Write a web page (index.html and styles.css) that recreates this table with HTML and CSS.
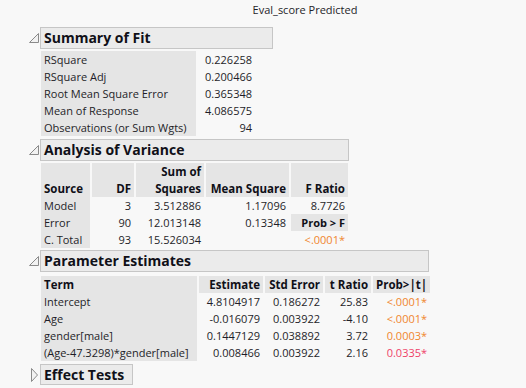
FILE: index.html
```html
<!DOCTYPE html>
<html lang="en">
<head>
  <meta charset="UTF-8" />
  <title>Eval_score Predicted</title>
  <link rel="stylesheet" href="styles.css">
</head>
<body>
  <div class="report-title">Eval_score Predicted</div>

  <!-- Summary of Fit -->
  <div class="outline outline-fit">
    <div class="outline-head">
      <svg class="disclosure" width="12" height="12" viewBox="0 0 12 12"><polygon points="10.5,1.5 10.5,10.5 1.5,10.5" fill="#f2f2f2" stroke="#8a8a8a" stroke-width="1"/></svg>
      <div class="outline-box box-fit">Summary of Fit</div>
    </div>
    <table class="report-table fit-table">
      <tr><td class="lbl">RSquare</td><td class="num">0.226258</td></tr>
      <tr><td class="lbl">RSquare Adj</td><td class="num">0.200466</td></tr>
      <tr><td class="lbl">Root Mean Square Error</td><td class="num">0.365348</td></tr>
      <tr><td class="lbl">Mean of Response</td><td class="num">4.086575</td></tr>
      <tr><td class="lbl">Observations (or Sum Wgts)</td><td class="num">94</td></tr>
    </table>
  </div>

  <!-- Analysis of Variance -->
  <div class="outline outline-anova">
    <div class="outline-head">
      <svg class="disclosure" width="12" height="12" viewBox="0 0 12 12"><polygon points="10.5,1.5 10.5,10.5 1.5,10.5" fill="#f2f2f2" stroke="#8a8a8a" stroke-width="1"/></svg>
      <div class="outline-box box-anova">Analysis of Variance</div>
    </div>
    <table class="report-table anova-table">
      <tr class="hdr">
        <th class="lbl c-src">Source</th>
        <th class="c-df">DF</th>
        <th class="c-ss">Sum of<br>Squares</th>
        <th class="c-ms">Mean Square</th>
        <th class="c-f">F Ratio</th>
      </tr>
      <tr><td class="lbl">Model</td><td class="num">3</td><td class="num">3.512886</td><td class="num">1.17096</td><td class="num">8.7726</td></tr>
      <tr><td class="lbl">Error</td><td class="num">90</td><td class="num">12.013148</td><td class="num">0.13348</td><td class="num prob-head">Prob &gt; F</td></tr>
      <tr><td class="lbl">C. Total</td><td class="num">93</td><td class="num">15.526034</td><td class="num"></td><td class="num p-orange">&lt;.0001*</td></tr>
    </table>
  </div>

  <!-- Parameter Estimates -->
  <div class="outline outline-param">
    <div class="outline-head">
      <svg class="disclosure" width="12" height="12" viewBox="0 0 12 12"><polygon points="10.5,1.5 10.5,10.5 1.5,10.5" fill="#f2f2f2" stroke="#8a8a8a" stroke-width="1"/></svg>
      <div class="outline-box box-param">Parameter Estimates</div>
    </div>
    <table class="report-table param-table">
      <tr class="hdr">
        <th class="lbl c-term">Term</th>
        <th class="c-est">Estimate</th>
        <th class="c-se">Std Error</th>
        <th class="c-t">t Ratio</th>
        <th class="c-p">Prob&gt;|t|</th>
      </tr>
      <tr><td class="lbl">Intercept</td><td class="num">4.8104917</td><td class="num">0.186272</td><td class="num">25.83</td><td class="num p-orange">&lt;.0001*</td></tr>
      <tr><td class="lbl">Age</td><td class="num">-0.016079</td><td class="num">0.003922</td><td class="num">-4.10</td><td class="num p-orange">&lt;.0001*</td></tr>
      <tr><td class="lbl">gender[male]</td><td class="num">0.1447129</td><td class="num">0.038892</td><td class="num">3.72</td><td class="num p-orange">0.0003*</td></tr>
      <tr><td class="lbl">(Age-47.3298)*gender[male]</td><td class="num">0.008466</td><td class="num">0.003922</td><td class="num">2.16</td><td class="num p-red">0.0335*</td></tr>
    </table>
  </div>

  <!-- Effect Tests (closed) -->
  <div class="outline outline-effect">
    <div class="outline-head">
      <svg class="disclosure closed" width="12" height="16" viewBox="0 0 12 16"><polygon points="3.5,1.5 9.5,8 3.5,14.5" fill="#f2f2f2" stroke="#8a8a8a" stroke-width="1"/></svg>
      <div class="outline-box box-effect">Effect Tests</div>
    </div>
  </div>
</body>
</html>
```

FILE: styles.css
```css
:root {
  --page-bg: #f8f8f8;
  --head-bg: #ebebeb;
  --head-border: #c6c6c6;
  --cell-gray: #e5e5e5;
  --text-color: #1e1e28;
  --p-orange: #f0862e;
  --p-red: #ef3f68;
}
* {
  margin: 0;
  padding: 0;
  box-sizing: border-box;
}
body {
  font-family: 'Open Sans', 'Noto Sans', sans-serif;
  font-size: 11px;
  background: var(--page-bg);
  color: var(--text-color);
  width: 526px;
  height: 388px;
  overflow: hidden;
}
.report-title {
  padding: 2px 0 0 84px;
  height: 27px;
  text-align: center;
  line-height: 16px;
}
.outline-head {
  display: flex;
  align-items: center;
  padding-left: 28px;
}
.disclosure {
  flex: none;
}
.outline-box {
  background: var(--head-bg);
  border: 1px solid var(--head-border);
  font-weight: 700;
  font-size: 14px;
  height: 22px;
  line-height: 19px;
  padding-left: 3px;
  color: #101018;
}
.box-fit { width: 233px; }
.box-anova { width: 309px; }
.box-param { width: 389px; }
.box-effect { width: 93px; height: 21px; }

.report-table {
  border-collapse: separate;
  border-spacing: 2px 0;
  margin-left: 39px;
  line-height: 17px;
}
.report-table td,
.report-table th {
  padding: 0 3px;
  white-space: nowrap;
  font-weight: 400;
}
.report-table th {
  background: var(--cell-gray);
  font-weight: 700;
  text-align: right;
  vertical-align: bottom;
  font-size: 11.5px;
  color: #101018;
}
.report-table .lbl {
  background: var(--cell-gray);
  text-align: left;
}
.report-table .num {
  text-align: right;
}

/* Summary of Fit */
.fit-table { margin-top: 2px; }
.fit-table .lbl { width: 155px; }
.fit-table .num { width: 54px; padding-right: 0; }

/* ANOVA */
.outline-anova { margin-top: 3px; }
.anova-table { margin-top: 2px; }
.c-src { width: 49px; }
.c-df { width: 42px; }
.c-ss { width: 68px; }
.c-ms { width: 83px; }
.c-f { width: 57px; }
.report-table .prob-head {
  background: var(--cell-gray);
  font-weight: 700;
  color: #101018;
}

/* Parameter Estimates */
.outline-param { margin-top: 2px; }
.param-table { margin-top: 4px; }
.c-term { width: 156px; }
.c-est { width: 64px; }
.c-se { width: 58px; }
.c-t { width: 46px; }
.c-p { width: 57px; }

.p-orange { color: var(--p-orange); }
.p-red { color: var(--p-red); }

/* Effect Tests */
.outline-effect { margin-top: 3px; }
```
